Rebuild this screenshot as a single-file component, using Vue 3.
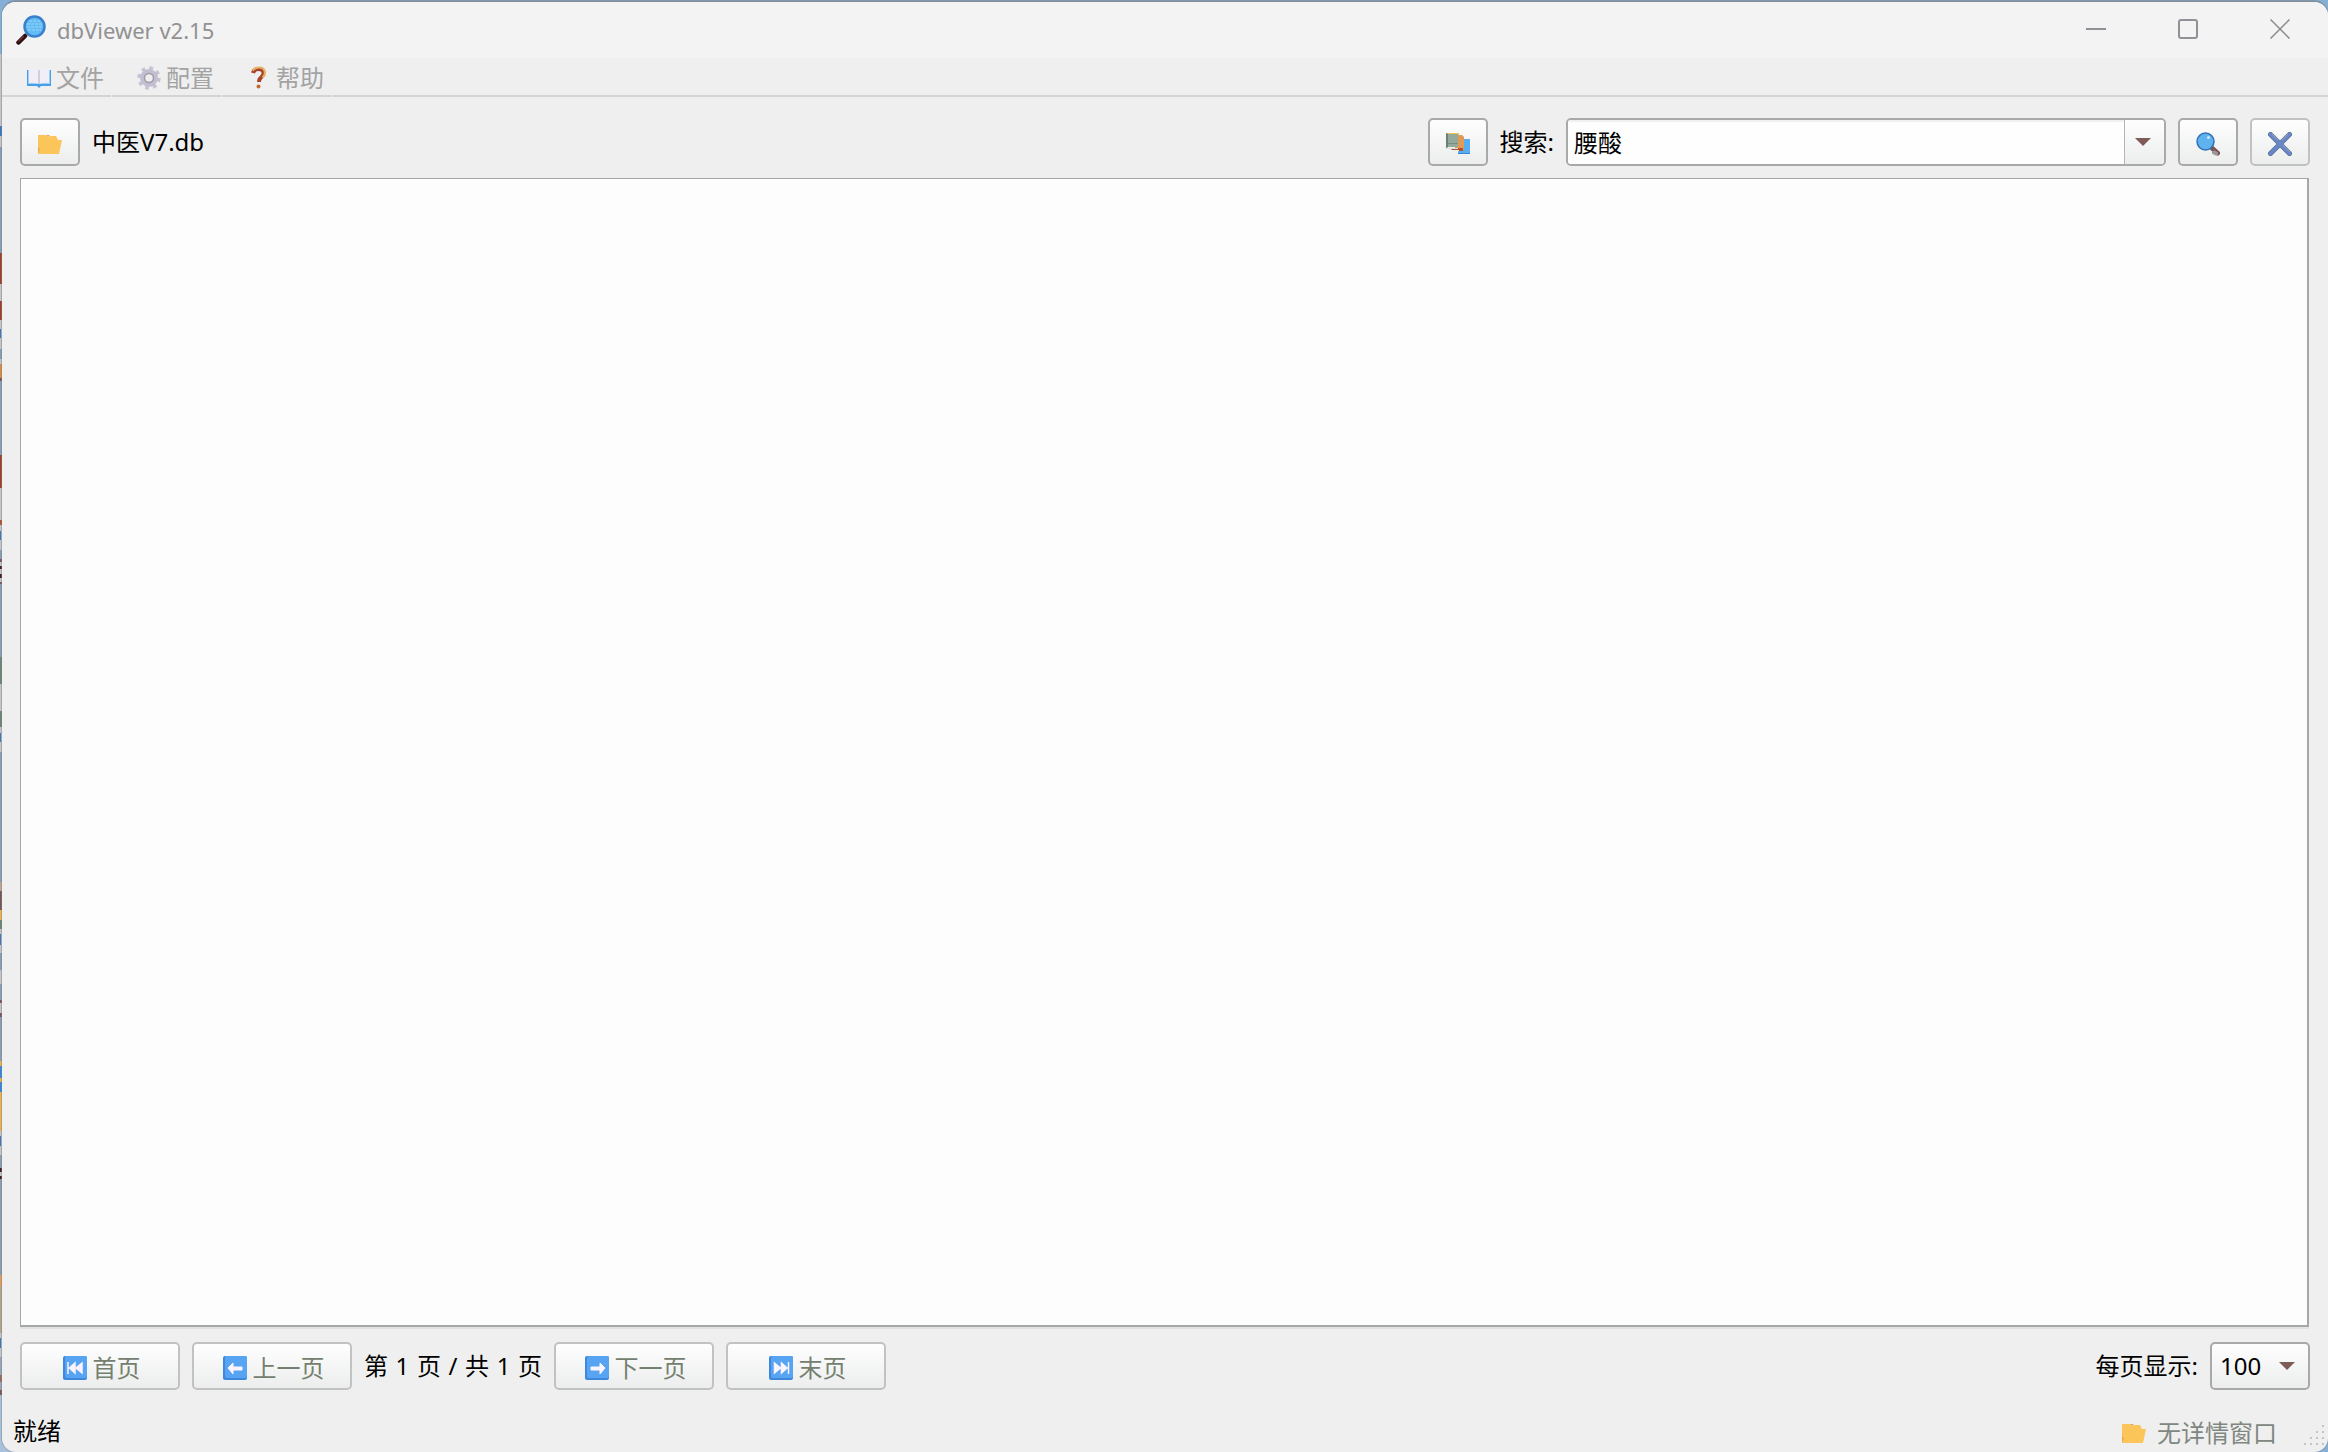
<script setup>
import { ref, computed } from 'vue'

const archivo = ref('中医V7.db')
const busqueda = ref('腰酸')
const porPagina = ref(100)
const pagina = ref(1)
const totalPaginas = ref(1)

const opciones = [20, 50, 100, 200]

const partesPagina = computed(() => ['第', pagina.value, '页', '/', '共', totalPaginas.value, '页'])

function limpiar() {
    busqueda.value = ''
}
</script>

<template>
    <div class="desktop">
        <main class="window">
            <header class="titlebar">
                <svg class="app-icon" viewBox="0 0 30 30">
                    <path d="M10 20l2-2" stroke="#b9bcc4" stroke-width="3" />
                    <path d="M2.500 27.500L9 21" stroke="#2a1012" stroke-width="4.500" stroke-linecap="round" />
                    <path d="M2.500 26.500L8 21" stroke="#7a2a2a" stroke-width="1.500" />
                    <circle cx="18.500" cy="11.500" r="10" fill="#62bbf3" stroke="#3a80cc" stroke-width="2.500" />
                    <path d="M13 6h11M11 9h15M11 12h15M12 15h13" stroke="#97d6fa" stroke-width="1"
                        stroke-dasharray="3 1" />
                </svg>
                <h1>dbViewer v2.15</h1>
                <div class="window-buttons">
                    <button aria-label="最小化">
                        <svg viewBox="0 0 20 20"><path d="M0 10h20" /></svg>
                    </button>
                    <button aria-label="最大化">
                        <svg viewBox="0 0 20 20"><rect x="1" y="1" width="18" height="18" rx="2" /></svg>
                    </button>
                    <button aria-label="关闭">
                        <svg viewBox="0 0 20 20"><path class="thin" d="M0.5 0.5l19 19M19.5 0.5l-19 19" /></svg>
                    </button>
                </div>
            </header>

            <nav class="menubar">
                <button>
                    <svg class="icon" viewBox="0 0 24 24">
                        <path d="M0 4h24v16H14l-2 2-2-2H0z" fill="#479de8" />
                        <path d="M1 4h22v14H1z" fill="#9bd2f8" />
                        <path d="M2 3q6-1 10 1q4-2 10-1v14q-6-1-10 1q-4-2-10-1z" fill="#f2eef8" />
                        <path d="M12 4v14" stroke="#c9c3d4" stroke-width="1.500" />
                    </svg>
                    文件
                </button>
                <button>
                    <svg class="icon" viewBox="0 0 24 24">
                        <circle cx="12" cy="12" r="9.7" fill="none" stroke="#c6c2d4" stroke-width="4"
                            stroke-dasharray="3.6 4.018" />
                        <circle cx="12" cy="12" r="6.5" fill="none" stroke="#c3bfd0" stroke-width="5" />
                        <circle cx="12" cy="12" r="4.5" fill="none" stroke="#a09ca8" stroke-width="1.5" />
                    </svg>
                    配置
                </button>
                <button>
                    <svg class="icon" viewBox="0 0 24 24">
                        <path d="M6 7Q7 3 11.500 3Q16.500 3 16.500 7Q16.500 9.500 14 11.500Q12 13 12 16" fill="none"
                            stroke="#a9452a" stroke-width="4" />
                        <path d="M5.500 4.500Q8 1.500 12 1.500Q17.500 1.500 18 6.500Q18 9.500 15.500 11.500" fill="none"
                            stroke="#eab068" stroke-width="2.200" />
                        <circle cx="11.500" cy="20.500" r="2" fill="#c8682f" />
                    </svg>
                    帮助
                </button>
            </nav>

            <section class="toolbar">
                <button class="btn square" title="打开">
                    <svg class="icon" viewBox="0 0 24 24">
                        <path d="M0 3h7l3 3h9v16H1L0 21z" fill="#e5a84b" />
                        <path d="M0 3h7l3 2l2-1h6l2 4h4l-3 14H1L0 12z" fill="#fbc55a" />
                        <path d="M8 3h4l-2 2zM0 16v5l2-4z" fill="#e5a84b" />
                    </svg>
                </button>
                <span class="filename">{{ archivo }}</span>

                <button class="btn square push" title="数据表">
                    <svg class="icon" viewBox="0 0 24 24">
                        <path d="M13 7h11v14l-12 1z" fill="#57aef2" />
                        <path d="M12 21h12v1H12z" fill="#3b86d0" />
                        <path d="M9 3h7l2 2v13H9z" fill="#e29b54" />
                        <path d="M5 16h12v3H6z" fill="#b0522e" />
                        <path d="M5 18h8v1H5z" fill="#eee" />
                        <path d="M1 1h12v2H1z" fill="#f3c452" />
                        <path d="M0 1l2 1h10v13H2l-2 1z" fill="#94a89c" />
                        <path d="M0 1l2 1v13l-2 1z" fill="#6c7f74" />
                        <path d="M2 11h10v1H2z" fill="#788c80" />
                        <path d="M0 16h12v1H0z" fill="#dedede" />
                    </svg>
                </button>
                <label for="busqueda">搜索:</label>
                <div class="combo">
                    <input id="busqueda" type="text" v-model="busqueda" />
                    <button aria-label="历史">
                        <svg class="arrow" viewBox="0 0 16 8"><path d="M0 0h16l-8 8z" /></svg>
                    </button>
                </div>
                <button class="btn square" title="搜索">
                    <svg class="icon" viewBox="0 0 24 24">
                        <path d="M15 15l3 3" stroke="#6c4a4a" stroke-width="4" />
                        <path d="M17 17l4.500 4" stroke="#7d5553" stroke-width="5" stroke-linecap="round" />
                        <path d="M18 20.500l2 1" stroke="#999" stroke-width="4" stroke-linecap="round" />
                        <circle cx="9.500" cy="9.500" r="8.500" fill="#5fb2ee" stroke="#3172b4" stroke-width="1.500" />
                        <circle cx="12.500" cy="5.500" r="1.500" fill="#c9ecff" />
                    </svg>
                </button>
                <button class="btn square soft" title="清除" @click="limpiar">
                    <svg class="icon" viewBox="0 0 24 24">
                        <path d="M2.500 2.500l19 19M21.500 2.500l-19 19" stroke="#5b6f94" stroke-width="5"
                            stroke-linecap="round" />
                        <path d="M2.500 2.500l19 19M21.500 2.500l-19 19" stroke="#6887c8" stroke-width="3.500"
                            stroke-linecap="round" />
                        <path d="M4 2l6 6M20 2l-6 6M15 13l7 7" stroke="#96a5b8" stroke-width="1" />
                    </svg>
                </button>
            </section>

            <section class="results"></section>

            <section class="pager">
                <button class="btn wide" disabled>
                    <svg class="icon" viewBox="0 0 24 24">
                        <rect width="24" height="24" rx="2" fill="#3f87dc" />
                        <rect x="2" width="22" height="22" rx="2" fill="#57a5f2" />
                        <path d="M5 6v12M12 7v10L6.500 12zM19 7v10l-6-5z" fill="#fbf4ff" stroke="#fbf4ff"
                            stroke-width="1.500" />
                    </svg>
                    首页
                </button>
                <button class="btn wide" disabled>
                    <svg class="icon" viewBox="0 0 24 24">
                        <rect width="24" height="24" rx="2" fill="#3f87dc" />
                        <rect x="2" width="22" height="22" rx="2" fill="#57a5f2" />
                        <path d="M5 12l5-5v4h9v3h-9v4z" fill="#fbf4ff" stroke="#fbf4ff" />
                    </svg>
                    上一页
                </button>
                <span class="page-info">
                    <span v-for="(parte, i) in partesPagina" :key="i">{{ parte }}</span>
                </span>
                <button class="btn wide" disabled>
                    <svg class="icon" viewBox="0 0 24 24">
                        <rect width="24" height="24" rx="2" fill="#3f87dc" />
                        <rect x="2" width="22" height="22" rx="2" fill="#57a5f2" />
                        <path d="M20 12l-5-5v4H6v3h9v4z" fill="#fbf4ff" stroke="#fbf4ff" />
                    </svg>
                    下一页
                </button>
                <button class="btn wide" disabled>
                    <svg class="icon" viewBox="0 0 24 24">
                        <rect width="24" height="24" rx="2" fill="#3f87dc" />
                        <rect x="2" width="22" height="22" rx="2" fill="#57a5f2" />
                        <path d="M19.500 6v12M12.500 7v10l5.500-5zM5.500 7v10l6-5z" fill="#fbf4ff" stroke="#fbf4ff"
                            stroke-width="1.500" />
                    </svg>
                    末页
                </button>
                <label class="push" for="porPagina">每页显示:</label>
                <div class="select-box">
                    <select id="porPagina" v-model="porPagina">
                        <option v-for="op in opciones" :key="op" :value="op">{{ op }}</option>
                    </select>
                    <svg class="arrow" viewBox="0 0 16 8"><path d="M0 0h16l-8 8z" /></svg>
                </div>
            </section>

            <footer class="statusbar">
                <span>就绪</span>
                <span class="detail push">
                    <svg class="icon" viewBox="0 0 24 24">
                        <path d="M0 3h7l3 3h9v16H1L0 21z" fill="#e5a84b" />
                        <path d="M0 3h7l3 2l2-1h6l2 4h4l-3 14H1L0 12z" fill="#fbc55a" />
                        <path d="M8 3h4l-2 2zM0 16v5l2-4z" fill="#e5a84b" />
                    </svg>
                    无详情窗口
                </span>
            </footer>
            <svg class="grip" viewBox="0 0 24 24">
                <path d="M0 20h24M6 14h18M12 8h12M18 2h6" stroke="#c4c4c4" stroke-width="2"
                    stroke-dasharray="2 4" />
            </svg>
        </main>
    </div>
</template>

<style>
body {
    margin: 0;
}
</style>

<style scoped>
.desktop {
    box-sizing: border-box;
    min-height: 100vh;
    display: flex;
    padding: 2px 0 0 2px;
    font-family: "Noto Sans", "Noto Sans CJK SC", sans-serif;
    font-size: 24px;
    line-height: 32px;
    color: #000;
    /* franja del escritorio que asoma a la izquierda */
    background:
        linear-gradient(transparent 329px, #3a78c0 329px 338px, transparent 338px 531px,
            #3a78c0 531px 540px, transparent 540px 733px, #3a78c0 733px 742px,
            transparent 742px 934px, #3a78c0 934px 945px, transparent 945px 1136px,
            #3a78c0 1136px 1146px, transparent 1146px 1338px, #3a78c0 1338px 1348px,
            transparent 1348px) 0 0 / 1px 100% no-repeat,
        linear-gradient(#84b0d8 54px, #c4c4c6 54px 126px, #3a78c0 126px 136px, #c4c4c6 136px 147px,
            #859db5 147px 253px, #a43c27 253px 284px, #c4c4c6 284px 301px,
            #a43c27 301px 320px, #c4c4c6 320px 349px, #859db5 349px 359px, #c4c4c6 359px 364px,
            #d98a40 364px 378px, #7a5555 378px 381px, #859db5 381px 455px, #a43c27 455px 488px,
            #c4c4c6 488px 520px, #b2512c 520px 525px, #c4c4c6 525px 550px, #859db5 550px 559px,
            #7a5555 559px 562px, #c4c4c6 562px 566px, #4a1c20 566px 569px, #c4c4c6 569px 574px,
            #4a1c20 574px 578px, #c4c4c6 578px 582px, #7a5555 582px 584px, #859db5 584px 657px,
            #6f8570 657px 684px, #c4c4c6 684px 711px, #6f8570 711px 727px, #c4c4c6 727px 752px,
            #859db5 752px 882px, #c0a68c 882px 891px, #7a5555 891px 910px, #ecb04e 910px 920px,
            #6f8570 920px 929px, #c4c4c6 929px 953px, #859db5 953px 970px, #c4c4c6 970px 984px,
            #859db5 984px 1000px, #7a5555 1000px 1003px, #c4c4c6 1003px 1013px, #7a5555 1013px 1017px,
            #8c9db1 1017px 1061px, #ecb04e 1061px 1066px, #3784dc 1066px 1078px, #ecb04e 1078px 1082px,
            #3784dc 1082px 1092px, #ecb04e 1092px 1131px, #c4c4c6 1131px 1155px, #8c9db1 1155px 1168px,
            #4a1c20 1168px 1172px, #c4c4c6 1172px 1176px, #4a1c20 1176px 1179px, #8c9db1 1179px 1275px,
            #e59a55 1275px 1286px, #b5a488 1286px 1333px, #c4c4c6 1333px 1357px, #98a5b8 1357px 1375px,
            #9a6a5a 1375px 1382px, #98a5b8 1382px 1390px, #7a5555 1390px 1395px, #a9c0da 1395px) 0 0 / 24px 100% no-repeat,
        #84b0d8;
}

.window {
    position: relative;
    flex: 1;
    display: flex;
    flex-direction: column;
    border-radius: 14px;
    background: #efefef;
    box-shadow: 0 0 0 1px rgba(120, 130, 140, 0.4), 0 -2px 0 0 #8397aa;
    overflow: hidden;
}

button {
    font: inherit;
    color: inherit;
    padding: 0;
    border: none;
    background: none;
}

svg {
    display: block;
    flex: none;
    fill: none;
}

.icon {
    width: 24px;
    height: 24px;
}

.arrow {
    width: 16px;
    height: 8px;
}

.arrow path {
    fill: #7e5a58;
}

.push {
    margin-left: auto;
}

.titlebar {
    display: flex;
    align-items: center;
    height: 56px;
    padding: 0 2px 0 14px;
    background: #f3f3f3;
}

.app-icon {
    width: 30px;
    height: 30px;
}

h1 {
    margin: 0;
    padding-left: 11px;
    font-size: 22px;
    font-weight: 400;
    color: #919191;
}

.window-buttons {
    display: flex;
    align-self: flex-start;
    margin-left: auto;
}

.window-buttons button {
    display: flex;
    align-items: center;
    justify-content: center;
    width: 92px;
    height: 54px;
}

.window-buttons svg {
    width: 20px;
    height: 20px;
    stroke: #929096;
    stroke-width: 2;
}

.window-buttons .thin {
    stroke: #8a8a8a;
    stroke-width: 1.5;
}

.menubar {
    display: flex;
    height: 39px;
    gap: 1px;
    color: #a3a3a3;
}

.menubar button {
    display: flex;
    align-items: center;
    gap: 5px;
    width: 109px;
    padding: 2px 0 0 25px;
    border-bottom: 2px solid #d4d4d4;
}

.menubar::after {
    content: "";
    flex: 1;
    border-bottom: 2px solid #d4d4d4;
}

.toolbar,
.pager {
    display: flex;
    align-items: center;
    gap: 12px;
    padding: 0 18px;
}

.toolbar {
    padding-top: 21px;
}

.btn {
    box-sizing: border-box;
    display: flex;
    align-items: center;
    justify-content: center;
    gap: 6px;
    height: 48px;
    padding-top: 3px;
    border: 2px solid #a9a9a9;
    border-radius: 5px;
    background: linear-gradient(#fefefe, #eceded);
}

.square {
    width: 60px;
}

.wide {
    width: 160px;
    padding-left: 3px;
    color: #74806f;
    border-color: #c2c2c2;
}

.soft {
    border-color: #c2c2c2;
}

.combo {
    box-sizing: border-box;
    display: flex;
    width: 600px;
    height: 48px;
    border: 2px solid #a9a9a9;
    border-radius: 5px;
    background: #fff;
    overflow: hidden;
}

.combo input {
    flex: 1;
    min-width: 0;
    padding: 0 6px;
    font: inherit;
    color: inherit;
    border: none;
    border-top: 2px solid #f0f0f0;
    outline: none;
    background: #fefefe;
}

.combo button {
    display: flex;
    align-items: center;
    justify-content: center;
    width: 40px;
    padding-right: 4px;
    border-left: 1px solid #b4b4bc;
    background: linear-gradient(#fefefe, #eceded);
}

.results {
    flex: 1;
    margin: 12px 19px 0 18px;
    border: 1px solid #a4a8a6;
    border-right-width: 2px;
    border-bottom-width: 2px;
    background: #fdfdfd;
    box-shadow: 0 2px 0 #e2e2e2;
}

.pager {
    padding-top: 15px;
}

.page-info {
    display: flex;
    justify-content: space-between;
    width: 178px;
}

.select-box {
    box-sizing: border-box;
    display: flex;
    align-items: center;
    width: 100px;
    height: 48px;
    border: 2px solid #a9a9a9;
    border-radius: 5px;
    background: linear-gradient(#fefefe, #eceded);
}

.select-box select {
    flex: 1;
    height: 44px;
    margin-right: -28px;
    padding: 0 0 0 8px;
    font: inherit;
    color: inherit;
    border: none;
    background: none;
    appearance: none;
}

.select-box .arrow {
    margin-right: 13px;
    pointer-events: none;
}

.statusbar {
    display: flex;
    align-items: center;
    height: 36px;
    padding: 23px 51px 3px 11px;
}

.detail {
    display: flex;
    align-items: center;
    gap: 11px;
    padding-top: 3px;
    color: #808780;
}

/* tirador de la esquina, encima de la barra de estado */
.grip {
    position: absolute;
    right: 0;
    bottom: 4px;
    width: 24px;
    height: 24px;
}
</style>
